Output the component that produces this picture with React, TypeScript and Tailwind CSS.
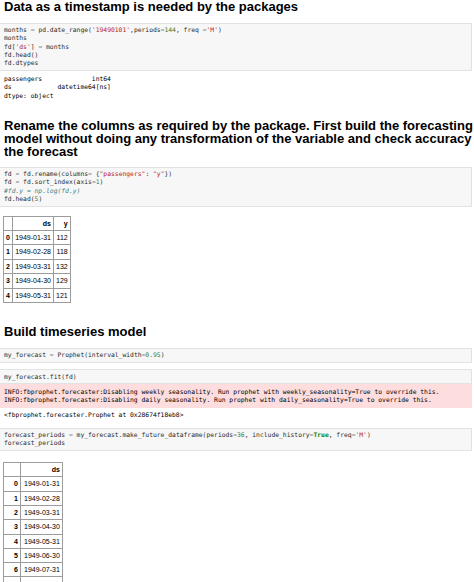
import React from "react";

const mono = "font-['DejaVu_Sans_Mono',monospace] text-[6.35px] leading-[8.33px] whitespace-pre";
const heading = "font-['Liberation_Sans',Arial,sans-serif] font-bold text-[13px] leading-[13px] text-black pl-[4px] whitespace-nowrap";

const S = ({ children }: { children: React.ReactNode }) => <span className="text-[#ba2121]">{children}</span>;
const O = ({ children }: { children: React.ReactNode }) => <span className="text-[#8a8a8a]">{children}</span>;
const N = ({ children }: { children: React.ReactNode }) => <span className="text-[#3a7a3a]">{children}</span>;

function Cell({ children, className = "" }: { children: React.ReactNode; className?: string }) {
  return (
    <div className={`w-[472px] bg-[#f7f7f7] border-y border-r border-[#e2e2e2] py-[2.3px] pl-[4px] text-[#2a2a2a] ${mono} ${className}`}>
      {children}
    </div>
  );
}

const td = "border border-[#9c9c9c] px-[2px] py-0 text-right align-middle whitespace-nowrap";

function Table1() {
  const rows = [
    ["0", "1949-01-31", "112"],
    ["1", "1949-02-28", "118"],
    ["2", "1949-03-31", "132"],
    ["3", "1949-04-30", "129"],
    ["4", "1949-05-31", "121"],
  ];
  return (
    <table className="self-start ml-[3px] mt-[9.7px] border-collapse font-['Liberation_Sans',Arial,sans-serif] text-[7px] leading-none text-black">
      <thead>
        <tr className="h-[13.3px]">
          <th className={`${td} w-[9px]`}></th>
          <th className={`${td} font-bold w-[41px]`}>ds</th>
          <th className={`${td} font-bold w-[16px]`}>y</th>
        </tr>
      </thead>
      <tbody>
        {rows.map((r) => (
          <tr key={r[0]} className="h-[14.5px]">
            <td className={`${td} font-bold text-left`}>{r[0]}</td>
            <td className={td}>{r[1]}</td>
            <td className={td}>{r[2]}</td>
          </tr>
        ))}
      </tbody>
    </table>
  );
}

function Table2() {
  const rows = [
    ["0", "1949-01-31"],
    ["1", "1949-02-28"],
    ["2", "1949-03-31"],
    ["3", "1949-04-30"],
    ["4", "1949-05-31"],
    ["5", "1949-06-30"],
    ["6", "1949-07-31"],
    ["7", "1949-08-31"],
    ["8", "1949-09-30"],
  ];
  return (
    <table className="self-start ml-[3px] mt-[11.4px] border-collapse font-['Liberation_Sans',Arial,sans-serif] text-[7px] leading-none text-black">
      <thead>
        <tr className="h-[14px]">
          <th className={`${td} w-[17px]`}></th>
          <th className={`${td} font-bold`}>ds</th>
        </tr>
      </thead>
      <tbody>
        {rows.map((r) => (
          <tr key={r[0]} className="h-[14.3px]">
            <td className={`${td} font-bold text-left`}>{r[0]}</td>
            <td className={`${td} pl-[3px]`}>{r[1]}</td>
          </tr>
        ))}
      </tbody>
    </table>
  );
}

export default function App() {
  return (
    <div className="w-[474px] h-[582px] overflow-hidden bg-white flex flex-col">
      <div className={heading}>Data as a timestamp is needed by the packages</div>

      <Cell className="mt-[9.7px]">
        <div>months <O>=</O> pd.date_range(<S>'19490101'</S>,periods<O>=</O><N>144</N>, freq <O>=</O><S>'M'</S>)</div>
        <div>months</div>
        <div>fd[<S>'ds'</S>] <O>=</O> months</div>
        <div>fd.head()</div>
        <div>fd.dtypes</div>
      </Cell>

      <div className={`mt-[4px] pl-[4px] text-black ${mono}`}>
        <div>passengers             int64</div>
        <div>ds            datetime64[ns]</div>
        <div>dtype: object</div>
      </div>

      <div className={`mt-[19.4px] ${heading}`}>
        <div>Rename the columns as required by the package. First build the forecasting</div>
        <div>model without doing any transformation of the variable and check accuracy</div>
        <div>the forecast</div>
      </div>

      <Cell className="mt-[8.5px]">
        <div>fd <O>=</O> fd.rename(columns<O>=</O> {"{"}<S>"passengers"</S>: <S>"y"</S>{"}"})</div>
        <div>fd <O>=</O> fd.sort_index(axis<O>=</O><N>1</N>)</div>
        <div className="italic text-[#408080]">#fd.y = np.log(fd.y)</div>
        <div>fd.head(<N>5</N>)</div>
      </Cell>

      <Table1 />

      <div className={`mt-[22px] ${heading}`}>Build timeseries model</div>

      <Cell className="mt-[9.6px]">
        <div>my_forecast <O>=</O> Prophet(interval_width<O>=</O><N>0.95</N>)</div>
      </Cell>

      <Cell className="mt-[6.7px]">
        <div>my_forecast.fit(fd)</div>
      </Cell>

      <div className={`w-[472px] bg-[#fddddd] py-[3.3px] pl-[4px] text-black ${mono}`}>
        <div>INFO:fbprophet.forecaster:Disabling weekly seasonality. Run prophet with weekly_seasonality=True to override this.</div>
        <div>INFO:fbprophet.forecaster:Disabling daily seasonality. Run prophet with daily_seasonality=True to override this.</div>
      </div>

      <div className={`mt-[3px] pl-[4px] text-black ${mono}`}>
        <div>&lt;fbprophet.forecaster.Prophet at 0x28674f18eb8&gt;</div>
      </div>

      <Cell className="mt-[8.8px]">
        <div>forecast_periods <O>=</O> my_forecast.make_future_dataframe(periods<O>=</O><N>36</N>, include_history<O>=</O><span className="font-bold text-[#008000]">True</span>, freq<O>=</O><S>'M'</S>)</div>
        <div>forecast_periods</div>
      </Cell>

      <Table2 />
    </div>
  );
}
